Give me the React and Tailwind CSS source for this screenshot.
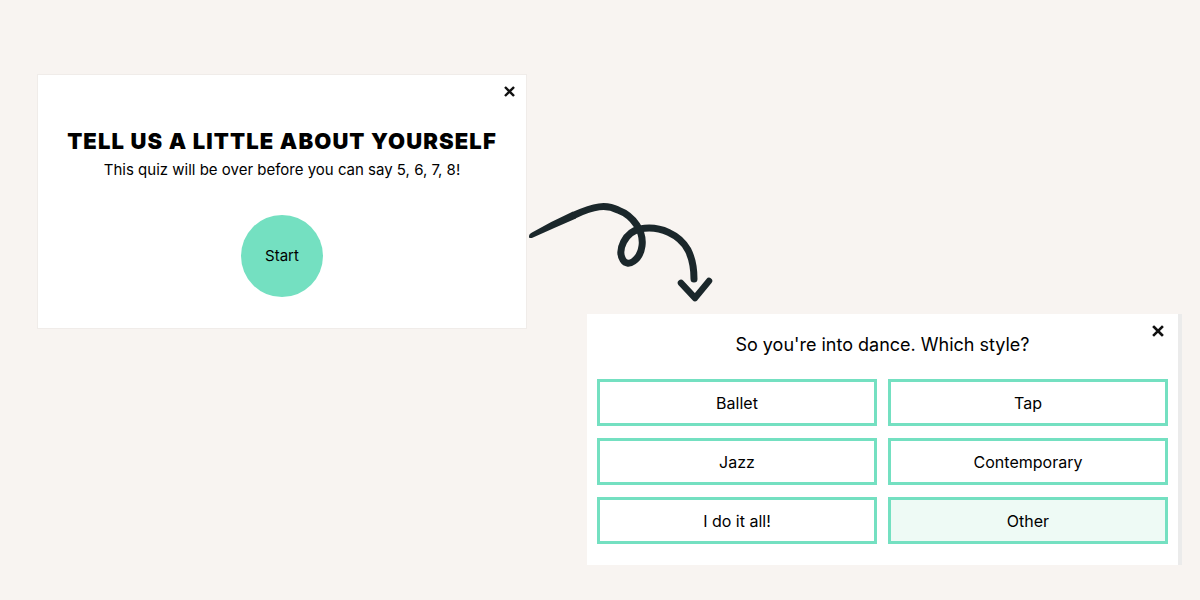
import React from "react";

const teal = "#74e0c1";

const CloseIcon = ({ className }) => (
  <svg viewBox="0 0 12 12" className={className}>
    <path d="M2 2 L10 10 M10 2 L2 10" stroke="#111" strokeWidth="2.6" strokeLinecap="square" />
  </svg>
);

const Arrow = () => (
  <svg
    viewBox="0 0 1200 600"
    className="absolute inset-0 w-[1200px] h-[600px] pointer-events-none"
  >
    {/* tapered start of the brush stroke */}
    <path d="M529,237.5 Q528.5,234 532,232.5 Q552,221 573,211.5 L576,218.5 Q554,228 533,237.5 Q530.5,238.5 529,237.5 Z" fill="#1b272b" />
    <g fill="none" stroke="#1b272b" strokeLinecap="round" strokeLinejoin="round">
      <path
        d="M574.5,215 C594,206 606,204 618,210 C634,216 644,232 642,246 C640,260 628,268 623,260 C617,250 625,232 640,229 C660,225 680,235 688,250 C694,262 694,272 694,279"
        strokeWidth="7"
      />
      <path d="M681,283 L695,298 L709,281" strokeWidth="6.5" />
    </g>
  </svg>
);

const options = ["Ballet", "Tap", "Jazz", "Contemporary", "I do it all!", "Other"];

export default function App() {
  return (
    <div
      className="relative w-[1200px] h-[600px] overflow-hidden bg-[#f8f4f1] text-black"
      style={{ fontFamily: "Inter, 'Noto Sans', sans-serif" }}
    >
      <div className="flex flex-col">
        {/* Intro card */}
        <div className="relative ml-[37px] mt-[74px] w-[490px] h-[255px] bg-white border border-[#f0ece9] flex flex-col items-center">
          <button className="absolute right-[11px] top-[11px]">
            <CloseIcon className="w-[11px] h-[11px]" />
          </button>
          <h1 className="mt-[55px] text-[22px] leading-none font-black tracking-[0.05em]">
            TELL US A LITTLE ABOUT YOURSELF
          </h1>
          <p className="mt-[10px] text-[15px] leading-none">
            This quiz will be over before you can say 5, 6, 7, 8!
          </p>
          <button
            className="mt-[38px] w-[82px] h-[82px] rounded-full flex items-center justify-center text-[15px]"
            style={{ backgroundColor: teal }}
          >
            Start
          </button>
        </div>

        {/* Question card */}
        <div className="relative ml-[587px] mt-[-15px] w-[595px] h-[251px] bg-white border-r-4 border-[#ebebeb] px-[10px] pb-[20px]">
          <button className="absolute right-[14px] top-[11px]">
            <CloseIcon className="w-[12px] h-[12px]" />
          </button>
          <p className="pt-[22px] h-[65px] text-center text-[18px] leading-none">
            So you're into dance. Which style?
          </p>
          <div className="grid grid-cols-2 gap-x-[11px] gap-y-[12px]">
            {options.map((o) => (
              <button
                key={o}
                className={`h-[47px] border-[3px] border-[#74e0c1] text-[16px] flex items-center justify-center ${
                  o === "Other" ? "bg-[#eefaf5]" : "bg-white"
                }`}
              >
                {o}
              </button>
            ))}
          </div>
        </div>
      </div>
      <Arrow />
    </div>
  );
}
